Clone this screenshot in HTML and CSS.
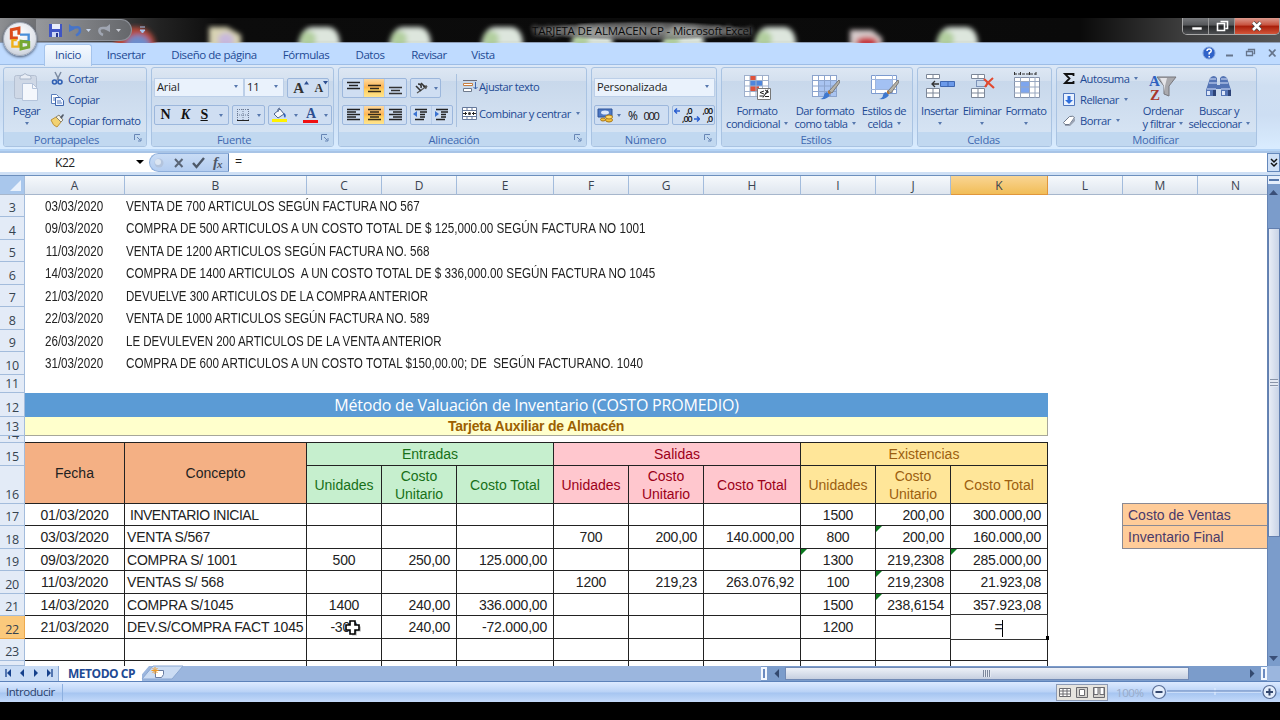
FILE: index.html
```html
<!DOCTYPE html>
<html lang="es">
<head>
    <meta charset="UTF-8">
    <title>TARJETA DE ALMACEN CP - Microsoft Excel</title>
    <link rel="stylesheet" href="styles.css">
</head>
<body>
    <div class="window">
        <!-- barra de título -->
        <div class="titlebar">
            <svg class="desktop" width="1280" height="25" viewBox="0 0 1280 25">
                <defs><filter id="soft"><feGaussianBlur stdDeviation="2.6"/></filter></defs>
                <g filter="url(#soft)">
                    <ellipse cx="135" cy="26" rx="20" ry="17" fill="#b5493a"/><ellipse cx="138" cy="28" rx="12" ry="11" fill="#6d8ccb"/>
                    <path d="M209 9h18l14 8v12h-32z" fill="#d8d3b4"/><ellipse cx="226" cy="22" rx="8" ry="7" fill="#c8b8dc"/>
                    <path d="M298 28q2-18 14-19h16q12 1 12 19z" fill="#dde6dd"/><circle cx="308" cy="21" r="8" fill="#b2cf9f"/>
                    <path d="M389 28q2-18 14-19h16q12 1 12 19z" fill="#dde6dd"/><circle cx="399" cy="21" r="8" fill="#b2cf9f"/>
                    <path d="M481 28q2-18 14-19h16q12 1 12 19z" fill="#dde6dd"/><circle cx="491" cy="21" r="8" fill="#b2cf9f"/>
                    <path d="M571 28q2-18 14-19h16q12 1 12 19z" fill="#dde6dd"/><circle cx="581" cy="21" r="8" fill="#b2cf9f"/>
                    <path d="M662 28q2-18 14-19h16q12 1 12 19z" fill="#dde6dd"/><circle cx="672" cy="21" r="8" fill="#b2cf9f"/>
                    <path d="M754 28q2-18 14-19h16q12 1 12 19z" fill="#dde6dd"/><circle cx="764" cy="21" r="8" fill="#b2cf9f"/>
                    <path d="M850 12h22l10 8v8h-32z" fill="#d8cccc"/><ellipse cx="867" cy="24" rx="11" ry="5" fill="#c8343c"/>
                    <path d="M936 28q2-18 14-19h16q12 1 12 19z" fill="#dde6dd"/><circle cx="946" cy="21" r="8" fill="#b2cf9f"/>
                </g>
            </svg>
            <div class="quick">
                <svg width="108" height="22" viewBox="0 0 108 22">
                    <path d="M13 5h13v13H13z" fill="#4055c4"/><path d="M16 5h8v5h-8z" fill="#e8edfb"/><path d="M16 13h7v5h-7z" fill="#cdd6f4"/><path d="M20 14h2v4h-2z" fill="#26368e"/>
                    <path d="M34 8.500h5c6-2 7 5 1 8" fill="none" stroke="#4774c8" stroke-width="2.500"/><path d="M33 5v8l6-3z" fill="#4774c8"/>
                    <path d="M50 10h5l-2.500 3z" fill="#c7d4ea"/>
                    <path d="M72 9h-4c-6-1-6 5-1 7" fill="none" stroke="#a0a6b2" stroke-width="2.500"/><path d="M74 5v8l-6-3z" fill="#a0a6b2"/>
                    <path d="M80 10h5l-2.500 3z" fill="#c7cad2"/>
                    <path d="M104 8h5M104 11h5l-2.500 3z" fill="#a7c3ec" stroke="#a7c3ec"/>
                </svg>
            </div>
            <div class="title">TARJETA DE ALMACEN CP - Microsoft Excel</div>
            <div class="winbtns">
                <span class="wb"><svg width="26" height="17"><path d="M9 9h10v3H9z" fill="#fff" stroke="#333" stroke-width=".6"/></svg></span>
                <span class="wb"><svg width="26" height="17"><path d="M11.500 3.500h7v7h-2M8.500 5.500h7v7h-7z" fill="none" stroke="#fff" stroke-width="1.600"/></svg></span>
                <span class="wb close"><svg width="44" height="17"><path d="M18 4.500l7.500 7.500M25.500 4.500L18 12" stroke="#444" stroke-width="4"/><path d="M18 4.500l7.500 7.500M25.500 4.500L18 12" stroke="#fff" stroke-width="2.600"/></svg></span>
            </div>
        </div>

        <div class="office">
            <svg width="24" height="26" viewBox="0 0 22 24" fill="none" stroke-width="2.800">
                <path d="M9 11H3V3.500l7-1.500v6" stroke="#dc4c1c"/>
                <path d="M11 8h8v6h-6" stroke="#4a8fd8" stroke-width="2.200"/>
                <path d="M8 13H4v6h6v-5" stroke="#f0b018" stroke-width="2.200"/>
                <path d="M12 14v7l7-1.500V15z" stroke="#76a832"/>
            </svg>
        </div>

        <!-- pestañas -->
        <div class="tabs">
            <span class="tab active">Inicio</span>
            <span class="tab insertar">Insertar</span>
            <span class="tab diseno">Diseño de página</span>
            <span class="tab formulas">Fórmulas</span>
            <span class="tab datos">Datos</span>
            <span class="tab revisar">Revisar</span>
            <span class="tab vista">Vista</span>
            <svg class="mdi" width="78" height="18" viewBox="0 0 78 18">
                <circle cx="7" cy="9" r="6" fill="#2f62c9" stroke="#7e9fd8"/><path d="M5 7q0-2 2.200-2t2 2q0 1-2 2v1.500M7.200 12v1.500" fill="none" stroke="#fff" stroke-width="1.500"/>
                <path d="M24 11.500h7" stroke="#66758c" stroke-width="2"/>
                <path d="M46.500 6.500v-1h6v4h-1M44.500 7.500h6v4h-6z" fill="none" stroke="#66758c" stroke-width="1.300"/>
                <path d="M67 5.500l6.500 7M73.500 5.500l-6.500 7" stroke="#66758c" stroke-width="1.800"/>
            </svg>
        </div>

        <!-- cinta de opciones -->
        <div class="ribbon">
            <div class="group g-clip">
                <div class="body">
                    <div class="big pegar">
                        <svg width="28" height="30" viewBox="0 0 28 30">
                            <rect x="1.500" y="3.500" width="22" height="23" rx="2" fill="#cfd8e6" stroke="#b4c0d2"/>
                            <path d="M7 5q0-2 3-2 2-3 4 0 4 0 4 2v2H7z" fill="#e8edf5" stroke="#a9b6ca"/>
                            <path d="M9.500 11.500h10l5 5v12h-15z" fill="#f4f7fc" stroke="#b4c3da"/><path d="M19.500 11.500v5h5" fill="none" stroke="#b4c3da"/>
                        </svg>
                        <span>Pegar</span><i class="dn"></i>
                    </div>
                    <div class="lines">
                        <div class="line"><svg width="15" height="15" viewBox="0 0 15 15"><path d="M5 1l4 8M11 1L7 9" stroke="#7d8ca3" stroke-width="1.500"/><circle cx="4.500" cy="11" r="2" fill="none" stroke="#2f5fb3" stroke-width="1.600"/><circle cx="10" cy="11" r="2" fill="none" stroke="#2f5fb3" stroke-width="1.600"/></svg>Cortar</div>
                        <div class="line"><svg width="15" height="15" viewBox="0 0 15 15"><path d="M1.500 2.500h5l2 2v7h-7z" fill="#fff" stroke="#5a7fbd"/><path d="M5.500 5.500h5l3 3v5h-8z" fill="#eef4ff" stroke="#3f66ad"/><path d="M7 9h4M7 11h5M3 6h2M3 8h2" stroke="#5a7fbd"/></svg>Copiar</div>
                        <div class="line"><svg width="15" height="15" viewBox="0 0 15 15"><path d="M1 7l5-3 5 5-4 5q-4-1-6-7z" fill="#f2d272" stroke="#bd9440"/><path d="M6 4l5 5 2-2-4-5z" fill="#f4f1e4" stroke="#8b8574"/><path d="M10 4l3-3 1 1-2.500 4z" fill="#555d6b"/></svg>Copiar formato</div>
                    </div>
                </div>
                <div class="label">Portapapeles<svg class="dlg" width="8" height="8"><path d="M.5 6V.5H6M3 3l3.500 3.500M7 4v3H4" fill="none" stroke="#6886b5"/></svg></div>
            </div>

            <div class="group g-font">
                <div class="body stack">
                    <div class="row">
                        <div class="combo name">Arial<i class="dn"></i></div>
                        <div class="combo size">11<i class="dn"></i></div>
                        <div class="btns sizes"><b class="serif up">A<svg width="5" height="4"><path d="M0 3.500h5L2.500 0z" fill="#2d4f91"/></svg></b><b class="serif small">A<svg width="5" height="4"><path d="M0 0h5L2.500 3.500z" fill="#2d4f91"/></svg></b></div>
                    </div>
                    <div class="row">
                        <div class="btns nks"><b>N</b><b class="it">K</b><b class="un">S</b><i class="dn"></i></div>
                        <div class="btns brd"><svg width="14" height="14" viewBox="0 0 14 14"><path d="M1.500 1v12M12.500 1v12M7 1v12M1 1.500h12M1 7h12" stroke="#6b7a94" stroke-dasharray="1 1"/><path d="M1 12.500h12" stroke="#222"/></svg><i class="dn"></i></div>
                        <div class="btns clr">
                            <svg width="16" height="16" viewBox="0 0 16 16"><path d="M2 7l6-5 4 5-6 4z" fill="#f6f8fc" stroke="#4d638c"/><path d="M6 5q-1-4 2-4" fill="none" stroke="#4d638c"/><path d="M12 6q3 2 1 5-2-2-1-5z" fill="#2f62bf"/><path d="M0 12h15v3H0z" fill="#fff200"/></svg><i class="dn"></i>
                            <span class="fc">A</span><i class="dn"></i>
                        </div>
                    </div>
                </div>
                <div class="label">Fuente<svg class="dlg" width="8" height="8"><path d="M.5 6V.5H6M3 3l3.500 3.500M7 4v3H4" fill="none" stroke="#6886b5"/></svg></div>
            </div>

            <div class="group g-align">
                <div class="body">
                    <div class="stack">
                        <div class="row">
                            <div class="btns three">
                                <span><svg width="15" height="14"><path d="M1 1.500h13M3 4.500h9M1 7.500h13" stroke="#222" stroke-width="1.400"/></svg></span>
                                <span class="on"><svg width="15" height="14"><path d="M1 4.500h13M3 7.500h9M1 10.500h13" stroke="#33291a" stroke-width="1.400"/></svg></span>
                                <span><svg width="15" height="14"><path d="M1 6.500h13M3 9.500h9M1 12.500h13" stroke="#333" stroke-width="1.400"/></svg></span>
                            </div>
                            <div class="btns ori"><svg width="15" height="14" viewBox="0 0 15 14"><path d="M3 12L13 5M13 5l-4 .5M13 5l-1.500 3" stroke="#555" fill="none" stroke-width="1.300"/><path d="M2 5l5 5M4 3q4 0 3 4M7 2l4 4" stroke="#333" fill="none" stroke-width="1.600"/></svg><i class="dn"></i></div>
                        </div>
                        <div class="row">
                            <div class="btns three">
                                <span><svg width="15" height="14"><path d="M1 1.500h13M1 4h9M1 6.500h13M1 9h9M1 11.500h13" stroke="#222" stroke-width="1.300"/></svg></span>
                                <span class="on"><svg width="15" height="14"><path d="M1 1.500h13M3 4h9M1 6.500h13M3 9h9M1 11.500h13" stroke="#33291a" stroke-width="1.300"/></svg></span>
                                <span><svg width="15" height="14"><path d="M1 1.500h13M5 4h9M1 6.500h13M5 9h9M1 11.500h13" stroke="#222" stroke-width="1.300"/></svg></span>
                            </div>
                            <div class="btns two">
                                <span><svg width="15" height="14"><path d="M2 1.500h12M7 4h7M7 6.500h5M7 9h5M2 11.500h9" stroke="#222" stroke-width="1.400"/><path d="M0 6l4-3v6z" fill="#3b73d1"/></svg></span>
                                <span><svg width="15" height="14"><path d="M2 1.500h12M7 4h7M7 6.500h5M7 9h5M2 11.500h9" stroke="#222" stroke-width="1.400"/><path d="M5 6L1 3v6z" fill="#3b73d1"/></svg></span>
                            </div>
                        </div>
                    </div>
                    <div class="wraps">
                        <div class="line"><svg width="16" height="15" viewBox="0 0 16 15"><path d="M1 1.500h14" stroke="#6b6b78"/><path d="M1.500 4.500h9v2h-9z" fill="#fff" stroke="#c77e40"/><path d="M1.500 9.500h8v3h-8z" fill="#fff" stroke="#6f7a8c"/><path d="M13.500 3v7l-2-2M13.500 10l2-2" fill="none" stroke="#3f66ad"/></svg>Ajustar texto</div>
                        <div class="line"><svg width="16" height="15" viewBox="0 0 16 15"><path d="M.5 1.500h14v12H.5zM.5 4.500h14M.5 10.500h14M5 1.500v3M10 1.500v3M5 10.500v3M10 10.500v3" fill="#fff" stroke="#64789b"/><path d="M1 7.500h4M10 7.500h4M3.500 6v3M11.500 6v3" stroke="#222"/><circle cx="7.500" cy="7.500" r="1.500" fill="#333"/></svg>Combinar y centrar<i class="dn"></i></div>
                    </div>
                </div>
                <div class="label">Alineación<svg class="dlg" width="8" height="8"><path d="M.5 6V.5H6M3 3l3.500 3.500M7 4v3H4" fill="none" stroke="#6886b5"/></svg></div>
            </div>

            <div class="group g-num">
                <div class="body stack">
                    <div class="row"><div class="combo fmt">Personalizada<i class="dn"></i></div></div>
                    <div class="row">
                        <div class="btns money">
                            <svg width="17" height="16" viewBox="0 0 17 16"><path d="M1 2h14v8H1z" fill="#4f79c4" stroke="#2f5598"/><ellipse cx="8" cy="5.500" rx="4" ry="2" fill="#dbe7fb"/><ellipse cx="12" cy="13" rx="3.500" ry="2" fill="#f4c23c" stroke="#a8771c"/><ellipse cx="12" cy="10" rx="3.500" ry="2" fill="#ffd968" stroke="#a8771c"/><ellipse cx="6" cy="12.500" rx="2.500" ry="1.500" fill="#f4c23c" stroke="#a8771c"/></svg><i class="dn"></i>
                            <span class="pct">%</span><span class="mil">000</span>
                        </div>
                        <div class="btns dec">
                            <span class="dd"><em>,0</em><em>,00</em><svg width="6" height="6"><path d="M0 3h6M3 .5L.5 3 3 5.500" fill="none" stroke="#2b5fd0" stroke-width="1.500"/></svg></span>
                            <span class="dd r"><em>,00</em><em>,0</em><svg width="6" height="6"><path d="M0 3h6M3 .5L5.500 3 3 5.500" fill="none" stroke="#2b5fd0" stroke-width="1.500"/></svg></span>
                        </div>
                    </div>
                </div>
                <div class="label">Número<svg class="dlg" width="8" height="8"><path d="M.5 6V.5H6M3 3l3.500 3.500M7 4v3H4" fill="none" stroke="#6886b5"/></svg></div>
            </div>

            <div class="group g-styles">
                <div class="body">
                    <div class="big b1">
                        <svg width="30" height="30" viewBox="0 0 30 30"><path d="M2 3h25v22H2z" fill="#fff"/><path d="M8 3h6v5H8z" fill="#e0523a"/><path d="M8 8h12v6H8z" fill="#4f86dc"/><path d="M8 14h9v6H8z" fill="#e0523a"/><path d="M2.500 3v22M8 3v22M14 3v22M20.500 3v22M26.500 3v22M2 3.500h25M2 8.500h25M2 14h25M2 19.500h25M2 24.500h25" stroke="#9fb0cc" fill="none"/><path d="M15.500 16.500h13v11h-13z" fill="#fff" stroke="#777"/><path d="M22 19l-4 1.500 4 1.500M17.500 24h4M23 18l3.500 2-3.500 2M23 24.500h4M26 17.500l-5 8" stroke="#222" fill="none"/></svg>
                        <span>Formato</span><span class="l2">condicional<i class="dn"></i></span>
                    </div>
                    <div class="big b2">
                        <svg width="30" height="30" viewBox="0 0 30 30"><path d="M2 3h25v22H2z" fill="#fff"/><path d="M8 9h19v16H8z" fill="#a9c4f1"/><path d="M2.500 3v22M8.500 3v22M14.500 3v22M20.500 3v22M26.500 3v22M2 3.500h25M2 8.500h25M2 14h25M2 19.500h25M2 24.500h25" stroke="#8ca4cd" fill="none"/><path d="M29 8l-10 11 3 2 8-11z" fill="#b6b3a9" stroke="#777"/><path d="M18 18l3 3q-1 2-3 1z" fill="#b57a3a"/><path d="M17 20l3 3q-3 5-10 4 4-1 4-4 1-3 3-3z" fill="#3f78ce"/></svg>
                        <span>Dar formato</span><span class="l2">como tabla<i class="dn"></i></span>
                    </div>
                    <div class="big b3">
                        <svg width="30" height="30" viewBox="0 0 30 30"><path d="M2.500 3.500h25v18h-25z" fill="#fff" stroke="#7d9bcf"/><path d="M6.500 7.500h17v10h-17z" fill="#a3c1f3" stroke="#6c90d2"/><path d="M2 7.500h25M6.500 3v18M23.500 3v18M2 17.500h25" stroke="#9db4dc" fill="none"/><path d="M29 8l-10 11 3 2 8-11z" fill="#b6b3a9" stroke="#777"/><path d="M18 18l3 3q-1 2-3 1z" fill="#b57a3a"/><path d="M17 20l3 3q-3 5-10 4 4-1 4-4 1-3 3-3z" fill="#3f78ce"/></svg>
                        <span>Estilos de</span><span class="l2">celda<i class="dn"></i></span>
                    </div>
                </div>
                <div class="label">Estilos</div>
            </div>

            <div class="group g-cells">
                <div class="body">
                    <div class="big c1">
                        <svg width="30" height="30" viewBox="0 0 30 30"><path d="M1.500 2.500h13v4h-13zM1.500 16.500h13v9h-13zM8 2.500v4M8 16.500v9M1.500 21h13" fill="#fff" stroke="#7c8798"/><path d="M15.500 9.500h14v5h-14z" fill="#6b9aea" stroke="#3e67b0"/><path d="M23 9.500v5" stroke="#3e67b0"/><path d="M14 12H7M10 9l-3 3 3 3" fill="none" stroke="#333" stroke-width="1.300"/></svg>
                        <span>Insertar</span><i class="dn"></i>
                    </div>
                    <div class="big c2">
                        <svg width="30" height="30" viewBox="0 0 30 30"><path d="M4.500 2.500h13v4h-13zM4.500 16.500h13v9h-13zM11 2.500v4M11 16.500v9M4.500 21h13" fill="#fff" stroke="#7c8798"/><path d="M9.500 8.500h10v6h-10z" fill="none" stroke="#2d4b85" stroke-dasharray="1 1"/><path d="M17 7l10 9M26 6q-5 4-8 9" fill="none" stroke="#e2492f" stroke-width="2.200"/></svg>
                        <span>Eliminar</span><i class="dn"></i>
                    </div>
                    <div class="big c3">
                        <svg width="30" height="30" viewBox="0 0 30 30"><path d="M3.500 5.500h25v20h-25z" fill="#fff" stroke="#8592aa"/><path d="M10 9h8v12h-8z" fill="#7ea6ee"/><path d="M9.500 5v21M18.500 5v21M24 5v21M3 9.500h25M3 15h25M3 21h25" stroke="#98a7c0" fill="none"/><path d="M3 2h22M3.500 0v4M9.500 0v4M18.500 0v4M25 0v4" stroke="#333" stroke-dasharray="3 1"/></svg>
                        <span>Formato</span><i class="dn"></i>
                    </div>
                </div>
                <div class="label">Celdas</div>
            </div>

            <div class="group g-edit">
                <div class="body">
                    <div class="lines">
                        <div class="line"><svg width="15" height="15" viewBox="0 0 15 15"><path d="M11.500 5V3H3l4.500 4.500L3 12h8.500v-2" fill="none" stroke="#111" stroke-width="1.800"/></svg>Autosuma<i class="dn"></i></div>
                        <div class="line"><svg width="15" height="15" viewBox="0 0 15 15"><path d="M1.500 1.500h11v12h-11z" fill="#e8f1ff" stroke="#4f76bd"/><path d="M5.500 4h3v4H11l-4 4-4-4h2.500z" fill="#2f6edb"/></svg>Rellenar<i class="dn"></i></div>
                        <div class="line"><svg width="15" height="15" viewBox="0 0 15 15"><path d="M1.500 9.500l6-6q4-1 5 1l-5 7H3z" fill="#fff" stroke="#6f7a8c"/><path d="M3 12h4l6-7v3l-5 5H3z" fill="#9aa3b3"/></svg>Borrar<i class="dn"></i></div>
                    </div>
                    <div class="big e1">
                        <svg width="30" height="30" viewBox="0 0 30 30"><path d="M9 5h19l-7 9v10l-5-2v-8z" fill="#a9a9ad" stroke="#77777d"/><path d="M12 6h7l-2 8v6l-1-6z" fill="#e4e4e8"/><text x="1" y="14" class="za">A</text><text x="2" y="28" class="zz">Z</text></svg>
                        <span>Ordenar</span><span class="l2">y filtrar<i class="dn"></i></span>
                    </div>
                    <div class="big e2">
                        <svg width="30" height="30" viewBox="0 0 30 30"><path d="M6 6q4-4 7 0v7h3V6q3-4 7 0l4 12v6H17v-7h-5v7H2v-6z" fill="#5474b4"/><path d="M6 7h6M17 7h6M5 11h8M16 11h8M3 17h9M17 17h9" stroke="#a9bce2" stroke-width="1.500"/><path d="M3 19h3v4H3zM18 19h3v4h-3z" fill="#dbe5f8"/><path d="M9 18h3v6H9zM24 18h3v6h-3z" fill="#2e4478"/></svg>
                        <span>Buscar y</span><span class="l2">seleccionar<i class="dn"></i></span>
                    </div>
                </div>
                <div class="label">Modificar</div>
            </div>
        </div>

        <!-- barra de fórmulas -->
        <div class="fbar">
            <div class="namebox"><span>K22</span><i class="dn"></i></div>
            <div class="fbtns"><svg width="79" height="19" viewBox="0 0 79 19"><circle cx="9" cy="9" r="4.500" fill="#b3c4dd"/><circle cx="8" cy="8" r="3" fill="#dbe5f2"/><path d="M25 5l7.500 8M32.500 5L25 13" stroke="#5a6576" stroke-width="2"/><path d="M43 9l3.500 4L54 4" fill="none" stroke="#4d5868" stroke-width="2.400"/><text x="63" y="13" class="fx">f</text><text x="67" y="14" class="fx sm">x</text></svg></div>
            <div class="formula">=</div>
            <div class="expand"><svg width="12" height="18"><path d="M3 5l3 3 3-3M3 9l3 3 3-3" fill="none" stroke="#111" stroke-width="1.500"/></svg></div>
        </div>

        <!-- hoja -->
        <div class="work">
            <div class="sheet">
                <div class="ch corner"><svg width="12" height="12"><path d="M11 0v11H0z" fill="#e9f1fc"/></svg></div>
                <div class="ch">A</div><div class="ch">B</div><div class="ch">C</div><div class="ch">D</div><div class="ch">E</div><div class="ch">F</div><div class="ch">G</div><div class="ch">H</div><div class="ch">I</div><div class="ch">J</div><div class="ch sel">K</div><div class="ch">L</div><div class="ch">M</div><div class="ch last">N</div>

                <div class="rn">3</div><div class="nd"><span>03/03/2020</span></div><div class="nt"><span>VENTA DE 700 ARTICULOS SEGÚN FACTURA NO 567</span></div>
                <div class="rn">4</div><div class="nd"><span>09/03/2020</span></div><div class="nt"><span class="wide">COMPRA DE 500 ARTICULOS A UN COSTO TOTAL DE $ 125,000.00 SEGÚN FACTURA NO 1001</span></div>
                <div class="rn">5</div><div class="nd"><span>11/03/2020</span></div><div class="nt"><span>VENTA DE 1200 ARTICULOS SEGÚN FACTURA NO. 568</span></div>
                <div class="rn">6</div><div class="nd"><span>14/03/2020</span></div><div class="nt"><span class="wide">COMPRA DE 1400 ARTICULOS&nbsp; A UN COSTO TOTAL DE $ 336,000.00 SEGÚN FACTURA NO 1045</span></div>
                <div class="rn">7</div><div class="nd"><span>21/03/2020</span></div><div class="nt"><span class="tight">DEVUELVE 300 ARTICULOS DE LA COMPRA ANTERIOR</span></div>
                <div class="rn">8</div><div class="nd"><span>22/03/2020</span></div><div class="nt"><span>VENTA DE 1000 ARTICULOS SEGÚN FACTURA NO. 589</span></div>
                <div class="rn">9</div><div class="nd"><span>26/03/2020</span></div><div class="nt"><span class="tight">LE DEVULEVEN 200 ARTICULOS DE LA VENTA ANTERIOR</span></div>
                <div class="rn">10</div><div class="nd"><span>31/03/2020</span></div><div class="nt"><span class="wide">COMPRA DE 600 ARTICULOS A UN COSTO TOTAL $150,00.00; DE&nbsp; SEGÚN FACTURANO. 1040</span></div>
                <div class="rn">11</div><div class="rest s14"></div>
                <div class="rn">12</div><div class="band blue"><span>Método de Valuación de Inventario (COSTO PROMEDIO)</span></div><div class="rest s3"></div>
                <div class="rn">13</div><div class="band yellow"><span>Tarjeta Auxiliar de Almacén</span></div><div class="rest s3"></div>
                <div class="rn r14">14</div><div class="gap"></div><div class="rest s3"></div>

                <div class="rn">15</div><div class="h or tall">Fecha</div><div class="h or tall">Concepto</div><div class="h gr s3">Entradas</div><div class="h pk s3">Salidas</div><div class="h ye s3">Existencias</div><div class="rest s3"></div>
                <div class="rn">16</div>
                <div class="h gr">Unidades</div><div class="h gr">Costo<br>Unitario</div><div class="h gr">Costo Total</div>
                <div class="h pk">Unidades</div><div class="h pk">Costo<br>Unitario</div><div class="h pk">Costo Total</div>
                <div class="h ye">Unidades</div><div class="h ye">Costo<br>Unitario</div><div class="h ye">Costo Total</div><div class="rest s3"></div>

                <div class="rn">17</div><div class="c">01/03/2020</div><div class="c l ini">INVENTARIO INICIAL</div><div class="c"></div><div class="c"></div><div class="c"></div><div class="c"></div><div class="c"></div><div class="c"></div><div class="c">1500</div><div class="c n">200,00</div><div class="c n">300.000,00</div><div class="rest"></div><div class="side top">Costo de Ventas</div>
                <div class="rn">18</div><div class="c">03/03/2020</div><div class="c l">VENTA S/567</div><div class="c"></div><div class="c"></div><div class="c"></div><div class="c">700</div><div class="c n">200,00</div><div class="c n">140.000,00</div><div class="c">800</div><div class="c n err">200,00</div><div class="c n">160.000,00</div><div class="rest"></div><div class="side">Inventario Final</div>
                <div class="rn">19</div><div class="c">09/03/2020</div><div class="c l">COMPRA S/ 1001</div><div class="c">500</div><div class="c n">250,00</div><div class="c n">125.000,00</div><div class="c"></div><div class="c"></div><div class="c"></div><div class="c err">1300</div><div class="c n">219,2308</div><div class="c n err">285.000,00</div><div class="rest s3"></div>
                <div class="rn">20</div><div class="c">11/03/2020</div><div class="c l">VENTAS S/ 568</div><div class="c"></div><div class="c"></div><div class="c"></div><div class="c">1200</div><div class="c n">219,23</div><div class="c n">263.076,92</div><div class="c">100</div><div class="c n err">219,2308</div><div class="c n">21.923,08</div><div class="rest s3"></div>
                <div class="rn">21</div><div class="c">14/03/2020</div><div class="c l">COMPRA S/1045</div><div class="c">1400</div><div class="c n">240,00</div><div class="c n">336.000,00</div><div class="c"></div><div class="c"></div><div class="c"></div><div class="c">1500</div><div class="c n err">238,6154</div><div class="c n">357.923,08</div><div class="rest s3"></div>
                <div class="rn sel">22</div><div class="c">21/03/2020</div><div class="c l dev">DEV.S/COMPRA FACT 1045</div><div class="c">-300<svg class="cursor" width="20" height="20" viewBox="0 0 20 20"><path d="M8 3h5v4h4v5h-4v4H8v-4H4V7h4z" fill="#888" opacity=".5" transform="translate(1 1.500)"/><path d="M7 3h5v4h4v5h-4v4H7v-4H3V7h4z" fill="#fff" stroke="#000" stroke-width="1.600"/></svg></div><div class="c n">240,00</div><div class="c n">-72.000,00</div><div class="c"></div><div class="c"></div><div class="c"></div><div class="c">1200</div><div class="c"></div><div class="c edit"><div class="editor">=<i class="caret"></i></div></div><div class="rest s3"></div>
                <div class="rn">23</div><div class="c"></div><div class="c"></div><div class="c"></div><div class="c"></div><div class="c"></div><div class="c"></div><div class="c"></div><div class="c"></div><div class="c"></div><div class="c"></div><div class="c"></div><div class="rest s3"></div>
                <div class="rn"></div><div class="c nb"></div><div class="c nb"></div><div class="c nb"></div><div class="c nb"></div><div class="c nb"></div><div class="c nb"></div><div class="c nb"></div><div class="c nb"></div><div class="c nb"></div><div class="c nb"></div><div class="c nb"></div><div class="rest s3"></div>
            </div>
            <div class="vscroll">
                <div class="split"></div>
                <svg class="arr" width="11" height="10"><path d="M1 7h9L5.500 2z" fill="#3a4f78"/></svg>
                <div class="vthumb"><i></i></div>
                <svg class="arr" width="11" height="12"><path d="M1 2h9L5.500 7z" fill="#3a4f78"/></svg>
            </div>
        </div>

        <!-- hojas y barra horizontal -->
        <div class="bottom">
            <svg class="nav" width="59" height="15"><path d="M6 3v8M52 3v8" stroke="#16418c" stroke-width="1.300"/><path d="M11 3v8L7 7zM24 3v8l-4-4zM34 3v8l4-4zM47 3v8l4-4z" fill="#16418c"/></svg>
            <div class="stab">METODO CP</div>
            <svg class="newtab" width="42" height="15" viewBox="0 0 42 15"><path d="M0 13L11 0h30L30 13z" fill="#cbdcf3" stroke="#8aa7d2"/><path d="M-4 13L7 0H-4z" fill="#fff"/><path d="M13.500 4.500h8v4l-2 3h-6z" fill="#fff" stroke="#6a7ea3"/><path d="M13 1v7M9.500 4.500h7M10.500 2l5 5M15.500 2l-5 5" stroke="#ef9b28"/></svg>
            <div class="hscroll">
                <i class="grip"></i>
                <svg width="18" height="15"><path d="M12 3v9L7.500 7.500z" fill="#33496f"/></svg>
                <div class="hthumb"><i></i></div>
                <svg class="right" width="18" height="15"><path d="M7 3v9l4.500-4.500z" fill="#33496f"/></svg>
                <i class="grip"></i>
            </div>
        </div>

        <div class="status">
            <span class="mode">Introducir</span>
            <div class="views"><svg width="52" height="17" viewBox="0 0 52 17" fill="none" stroke="#6b6b70"><path d="M3.500 4.500h11v8h-11zM3 7h12M3 10h12M7 4v9M11 4v9" fill="#fff"/><path d="M20.500 3.500h11v10h-11z" fill="#d5d3cf"/><path d="M23.500 5.500h5v6h-5z" fill="#fff"/><path d="M37.500 3.500h11v10h-11z" fill="#d5d3cf"/><path d="M38 3.500h4v7h-4zM44 3.500h4v7h-4z" fill="#fff"/></svg></div>
            <span class="pc">100%</span>
            <svg class="zoom" width="130" height="21" viewBox="0 0 130 21"><path d="M17 10h94M65 6v7" stroke="#e6f0ff"/><path d="M17 9h94" stroke="#5d7fb8"/><circle cx="9" cy="10" r="6.500" fill="#e4eefc" stroke="#5a6f98" stroke-width="1.200"/><path d="M5.500 10h7" stroke="#33476e" stroke-width="2"/><circle cx="119.500" cy="10" r="6.500" fill="#e4eefc" stroke="#5a6f98" stroke-width="1.200"/><path d="M116 10h7M119.500 6.500v7" stroke="#33476e" stroke-width="2"/></svg>
        </div>
    </div>
</body>
</html>
```

FILE: styles.css
```css
* {
    box-sizing: border-box;
}

body {
    margin: 0;
    background: #000;
    font-family: "Open Sans", "Noto Sans", sans-serif;
    font-size: 11.5px;
    letter-spacing: -0.45px;
    color: #1e4a94;
    overflow: hidden;
}

svg {
    display: block;
    flex: none;
}

.window {
    position: relative;
    width: 1280px;
    height: 720px;
    padding: 18px 0;
    overflow: hidden;
}

/* barra de titulo */
.titlebar {
    position: relative;
    display: grid;
    grid-template-columns: 532px 1fr 98px;
    height: 25px;
    background: linear-gradient(90deg, #8d8f92 0, #5b5c5f 60px, #222 160px, #0c0c0c 220px, #0a0a0a 1080px, #3c3c3c 1180px, #555 100%);
    border-bottom: 1px solid #8e9db5;
}

.desktop {
    position: absolute;
    left: 0;
    top: 0;
}

.quick {
    position: relative;
    width: 96px;
    height: 22px;
    margin: 1px 0 0 36px;
    border: 1px solid #8d9199;
    border-left: 0;
    border-radius: 0 11px 11px 0;
    background: linear-gradient(90deg, #96989c, #65676b);
}

.quick svg {
    margin-top: -1px;
    overflow: visible;
}

.title {
    position: relative;
    justify-self: start;
    height: 20px;
    margin-top: 3px;
    line-height: 20px;
    letter-spacing: -0.15px;
    white-space: nowrap;
    color: #0b0b0b;
    background: radial-gradient(closest-side, rgba(155,155,155,.8), rgba(110,110,110,.7) 75%, rgba(90,90,90,0));
    text-shadow: 0 0 5px #aaa, 0 0 5px #999;
}

.winbtns {
    position: relative;
    display: flex;
    height: 17px;
    border: 1px solid #a9a9a9;
    border-top: 0;
    border-radius: 0 0 5px 5px;
    overflow: hidden;
}

.wb {
    width: 26px;
    border-right: 1px solid #999;
    background: linear-gradient(#77797c, #55575a 45%, #232425 50%, #4d4f52);
}

.close {
    width: 45px;
    border: 0;
    background: linear-gradient(#dd9a8e, #c7513d 45%, #a71c08 50%, #d3563a);
}

.office {
    position: absolute;
    left: 3px;
    top: 22px;
    z-index: 2;
    display: flex;
    align-items: center;
    justify-content: center;
    width: 34px;
    height: 34px;
    border-radius: 50%;
    border: 1px solid #a4abb8;
    background: radial-gradient(circle at 50% 35%, #fff, #dfe3ea 60%, #b6bdca);
    box-shadow: 0 1px 3px #44536c;
}

/* pestañas */
.tabs {
    display: flex;
    height: 22px;
    padding-left: 44px;
    background: #bfdbff;
    border-bottom: 1px solid #9dbde6;
}

.tab {
    width: 68px;
    padding-top: 2px;
    line-height: 20px;
    text-align: center;
    white-space: nowrap;
}

.tab.active {
    width: 48px;
    height: 22px;
    margin-top: 1px;
    padding-top: 0;
    border: 1px solid #a5c4ec;
    border-bottom: 0;
    border-radius: 3px 3px 0 0;
    background: linear-gradient(#f4f9ff, #dfeaf8);
    line-height: 20px;
}

.tab.diseno { width: 108px; }
.tab.formulas { width: 76px; }
.tab.datos { width: 52px; }
.tab.revisar { width: 66px; }
.tab.vista { width: 42px; }

.mdi {
    margin: 1px 0 0 auto;
}

/* cinta */
.ribbon {
    display: flex;
    height: 86px;
    padding: 2px 0 0 3px;
    font-size: 11.2px;
    letter-spacing: -0.5px;
    background: linear-gradient(#dce8f7, #cfdff2 25%, #cddef3 60%, #d9ecff);
    border-bottom: 2px solid #b4d3f5;
}

.group {
    flex: none;
    display: flex;
    flex-direction: column;
    height: 80px;
    margin-right: 4px;
    border: 1px solid #a9c3e2;
    border-radius: 3px;
    background: linear-gradient(#dde7f3, #d4e0ef 16%, #c8d8eb 17%, #d9e6f5);
    white-space: nowrap;
}

.g-clip { width: 144px; }
.g-font { width: 183px; }
.g-align { width: 249px; }
.g-num { width: 126px; }
.g-styles { width: 192px; }
.g-cells { width: 135px; }
.g-edit { width: 201px; margin: 0; }

.body {
    display: flex;
    height: 64px;
}

.label {
    position: relative;
    height: 14px;
    line-height: 15px;
    padding-right: 17px;
    text-align: center;
    letter-spacing: -0.3px;
    color: #4069b0;
    background: #c1d8f0;
    border-radius: 0 0 2px 2px;
}

.g-styles .label,
.g-cells .label,
.g-edit .label {
    padding-right: 2px;
}

.dlg {
    position: absolute;
    right: 4px;
    top: 2px;
}

.dn {
    display: inline-block;
    flex: none;
    width: 0;
    height: 0;
    border: 2.5px solid transparent;
    border-top: 3px solid #5778ae;
    border-bottom: 0;
}

.big {
    display: flex;
    flex-direction: column;
    align-items: center;
    padding-top: 4px;
    line-height: 13px;
}

.big svg {
    margin-bottom: 2px;
}

.big > .dn {
    margin-top: 5px;
}

.big span {
    display: block;
}

.big .l2 {
    display: flex;
    align-items: center;
    gap: 4px;
}

.pegar { width: 45px; }
.b1 { width: 70px; }
.b2 { width: 66px; }
.b3 { width: 52px; }
.c1 { width: 43px; }
.c2 { width: 42px; }
.c3 { width: 46px; }
.e1 { width: 44px; margin-left: 7px; }
.e2 { width: 68px; }

.lines {
    display: flex;
    flex-direction: column;
    padding: 0 0 0 1px;
}

.line {
    display: flex;
    align-items: center;
    height: 21px;
    gap: 3px;
}

.g-edit .lines {
    width: 77px;
    padding-left: 5px;
}

.g-edit .line .dn {
    margin-left: 2px;
}

.stack {
    display: flex;
    flex-direction: column;
    gap: 7px;
    padding: 10px 0 0 2px;
}

.g-align .stack {
    padding-left: 3px;
}

.row {
    display: flex;
    gap: 3px;
    height: 20px;
}

.combo {
    display: flex;
    align-items: center;
    justify-content: space-between;
    height: 19px;
    padding: 0 5px 2px 2px;
    background: #eaf2fc;
    border: 1px solid #bccfe8;
    letter-spacing: -0.2px;
    color: #222;
}

.combo.name { width: 90px; margin-right: -3px; }
.combo.size { width: 40px; }
.combo.fmt { width: 121px; }

.btns {
    display: flex;
    align-items: center;
    height: 20px;
    border: 1px solid #9cb7dc;
    border-radius: 2px;
    background: #cfdef2;
    color: #111;
}

.sizes { width: 42px; justify-content: space-around; }
.sizes svg { position: absolute; right: -5px; top: 2px; }

.serif {
    position: relative;
    font: bold 15px/18px "Liberation Serif", serif;
    color: #333;
}

.serif.small { font-size: 12px; }

.nks {
    width: 75px;
    justify-content: space-around;
    font: bold 14px "Liberation Serif", serif;
}

.it { font-style: italic; }
.un { text-decoration: underline; }
.brd { width: 33px; justify-content: space-around; }
.clr { width: 64px; justify-content: space-around; }

.fc {
    width: 15px;
    height: 16px;
    border-bottom: 3px solid #f01010;
    font: bold 14px/13px "Liberation Serif", serif;
    text-align: center;
    color: #2d4f91;
}

.three span,
.two span {
    display: flex;
    align-items: center;
    justify-content: center;
    width: 21px;
    height: 18px;
    border-right: 1px solid #b9cde8;
}

.three { width: 65px; }
.two { width: 43px; }
.three span:last-child,
.two span:last-child { border: 0; }

.three .on {
    background: linear-gradient(#fdd9a0, #ffb755 45%, #ffcf5e 60%, #ffe48f);
}

.ori { width: 31px; justify-content: space-around; }

.wraps {
    display: flex;
    flex-direction: column;
    gap: 6px;
    height: 53px;
    margin: 6px 0 0 3px;
    padding: 2px 0 0 5px;
    border-left: 1px solid #a9c1df;
}

.wraps .line {
    gap: 1px;
}

.wraps .dn {
    margin-left: 4px;
}

.money { width: 75px; gap: 5px; padding-left: 2px; }
.pct { font-size: 12px; margin-left: 2px; }
.mil { font-size: 11px; letter-spacing: -1.2px; margin-left: 1px; }
.money .dn { margin-left: -2px; }
.dec { width: 43px; justify-content: space-around; }

.dd {
    position: relative;
    width: 17px;
    font-size: 9px;
    line-height: 8px;
    letter-spacing: -1px;
    text-align: right;
}

.dd em {
    display: block;
    font-style: normal;
    font-weight: 600;
}

.dd svg { position: absolute; left: -1px; top: 1px; }
.dd.r svg { top: auto; bottom: 1px; }

.za, .zz {
    font: bold 15px "Liberation Serif", serif;
    fill: #2f62bf;
}

.zz { fill: #a8362c; }

/* barra de formulas */
.fbar {
    display: flex;
    height: 25px;
    padding: 2px 0 0 1px;
    background: linear-gradient(#a8c4e6 0 2px, transparent 2px), linear-gradient(#fff 0 21px, #cfe0f5 21px 24px, #6c8fbd 24px);
}

.namebox {
    display: flex;
    align-items: center;
    justify-content: space-between;
    width: 148px;
    height: 19px;
    padding: 0 5px 1px 54px;
    color: #222;
    font-size: 12px;
}

.namebox .dn {
    border: 4px solid transparent;
    border-top: 4px solid #000;
    border-bottom: 0;
}

.fbtns {
    width: 80px;
    height: 19px;
    border-radius: 10px 0 0 10px;
    border: 1px solid #8daedb;
    border-right-color: #5e84b9;
    background: linear-gradient(#c9dcf5, #b4cdf0);
}

.fx {
    font: italic bold 15px "Liberation Serif", serif;
    fill: #4d5868;
}

.fx.sm { font-size: 11px; }

.formula {
    flex: 1;
    padding-left: 6px;
    font-size: 12.5px;
    line-height: 18px;
    color: #222;
}

.expand {
    width: 13px;
    height: 19px;
    border: 1px solid #6488bb;
    background: #cfe0f6;
}

/* hoja */
.work {
    display: flex;
    height: 490px;
    background: #fff;
}

.sheet {
    display: grid;
    width: 1267px;
    grid-template-columns: 25px 100px 182px 75px 75px 97px 75px 75px 97px 75px 75px 97px 75px 75px 69px;
    grid-template-rows: 19px 22px 23px 22px 23px 22px 23px 22px 23px 18px 24px 19px 7px 23px 38px 22px 23px 22px 23px 22px 23px 22px 5px;
    font: 14px "Liberation Sans", Arial, sans-serif;
    letter-spacing: 0;
    color: #222;
    white-space: nowrap;
    overflow: hidden;
}

.ch {
    border-right: 1px solid #a3bcdc;
    border-bottom: 1px solid #a6b6cc;
    background: linear-gradient(#f6f9fc, #dfe6ef);
    font: 12px/19px "Open Sans", sans-serif;
    text-align: center;
    color: #3a4350;
}

.ch.sel {
    background: linear-gradient(#f9d594, #f1bd57);
    border-color: #e0963c;
}

.ch.last {
    padding-left: 6px;
    border-right: 0;
}

.corner {
    display: flex;
    align-items: flex-end;
    justify-content: flex-end;
    padding: 0 2px 2px 0;
    background: #a9c7ec;
}

.rn {
    display: flex;
    align-items: flex-end;
    justify-content: center;
    border-right: 1px solid #a3bcdc;
    border-bottom: 1px solid #a3bcdc;
    background: #e3ebf7;
    font: 12.5px/17px "Open Sans", sans-serif;
    letter-spacing: -0.4px;
    color: #36434f;
    overflow: hidden;
}

.rn.sel {
    background: #fbc97c;
    border-color: #eda94d;
}

.rn.r14 {
    line-height: 14px;
}

.nd {
    margin-left: -1px;
    line-height: 22px;
    text-align: center;
}

.nt {
    grid-column: span 13;
    padding-left: 1px;
    line-height: 22px;
}

.nd span {
    display: inline-block;
    transform: scaleX(.83);
}

.nt span {
    display: inline-block;
    transform: scaleX(.833);
    transform-origin: 0 0;
}

.nt .wide { transform: scaleX(.836); }
.nt .tight { transform: scaleX(.822); }

.s3 { grid-column: span 3; }
.s14 { grid-column: span 14; }

.band {
    grid-column: span 11;
    text-align: center;
}

.blue {
    background: #5b9bd5;
    color: #fff;
    font: 16px/25px "Open Sans", sans-serif;
    letter-spacing: -0.2px;
}

.yellow {
    background: #ffffcc;
    color: #9c5f00;
    border: 1px solid #a7a79a;
    border-width: 0 1px 1px 0;
    font-weight: bold;
    font-size: 14px;
    letter-spacing: -0.2px;
    line-height: 18px;
}

.gap {
    grid-column: span 11;
    border-bottom: 1px solid #222;
}

.h {
    display: flex;
    align-items: center;
    justify-content: center;
    border-right: 1px solid #222;
    border-bottom: 1px solid #222;
    text-align: center;
    line-height: 18px;
}

.tall { grid-row: span 2; }
.or { background: #f4b084; color: #222; }
.gr { background: #c6efce; color: #187018; }
.pk { background: #ffc7ce; color: #9c0018; }
.ye { background: #ffe699; color: #9c5f10; }

.c {
    position: relative;
    border-right: 1px solid #222;
    border-bottom: 1px solid #222;
    line-height: 22px;
    letter-spacing: -0.2px;
    text-align: center;
}

.c.l { text-align: left; padding-left: 2px; }
.c.ini { padding-left: 5px; letter-spacing: -0.5px; }
.c.dev { letter-spacing: -0.15px; }
.c.n { text-align: right; padding-right: 6px; }
.c.nb { border-bottom: 0; }

/* marca de error de formula */
.err {
    background: linear-gradient(135deg, #0a7a1e 4px, transparent 4.5px) no-repeat;
}

.side {
    grid-column: span 2;
    padding-left: 5px;
    border-left: 1px solid #8a8a94;
    border-bottom: 1px solid #8a8a94;
    margin-left: -1px;
    background: #ffcc99;
    color: #4a3a6a;
    line-height: 22px;
}

.side.top {
    margin-top: -1px;
    border-top: 1px solid #8a8a94;
}

.editor {
    position: absolute;
    left: -1px;
    top: -2px;
    z-index: 1;
    width: 98px;
    height: 26px;
    border: 1px solid #333;
    background: #fff;
    line-height: 24px;
}

.editor::after {
    content: "";
    position: absolute;
    right: -2px;
    bottom: -1px;
    width: 3px;
    height: 4px;
    background: #000;
}

.caret {
    display: inline-block;
    width: 1px;
    height: 17px;
    background: #000;
    vertical-align: middle;
}

.cursor {
    position: absolute;
    left: 36px;
    top: 2px;
}

/* barras de desplazamiento */
.vscroll {
    display: flex;
    flex-direction: column;
    width: 13px;
    background: #7b9ccb;
    border-left: 1px solid #6584b4;
}

.split {
    height: 8px;
    margin-bottom: 4px;
    border: 2px solid #e4eefb;
    border-width: 3px 1px;
    background: #5577ab;
}

.vthumb {
    display: flex;
    align-items: center;
    justify-content: center;
    height: 309px;
    margin: 30px 0 auto;
    border: 1px solid #627faf;
    background: linear-gradient(90deg, #e8edf6, #c8d3e6);
}

.vthumb i {
    width: 8px;
    height: 8px;
    background: repeating-linear-gradient(#8994a8 0 1px, #e4e9f2 1px 3px);
}

.bottom {
    display: flex;
    height: 15px;
    background: #9bb6de;
}

.nav {
    background: #c9dcf5;
    border-right: 1px solid #8aa7d2;
}

.stab {
    width: 83px;
    padding-left: 2px;
    background: #fff;
    font-size: 12px;
    font-weight: 700;
    line-height: 15px;
    text-align: center;
    white-space: nowrap;
}

.newtab {
    overflow: visible;
}

.hscroll {
    display: flex;
    align-items: center;
    width: 506px;
    margin-left: auto;
    margin-right: 13px;
    background: #7b9ccb;
}

.grip {
    width: 6px;
    height: 13px;
    border: 2px solid #f2f7fe;
    background: #6a8ac0;
}

.hthumb {
    display: flex;
    align-items: center;
    justify-content: center;
    width: 404px;
    height: 13px;
    border: 1px solid #7089b5;
    background: linear-gradient(#edf1f8, #c6cfe0);
}

.hthumb i {
    width: 8px;
    height: 7px;
    background: repeating-linear-gradient(90deg, #7d889c 0 1px, #e4e9f2 1px 2px);
}

.right { margin-left: auto; }

.status {
    display: flex;
    align-items: center;
    height: 21px;
    border-top: 1px solid #5c82ba;
    background: linear-gradient(#dceaff, #b9d2f6 50%, #a6c5f1 55%, #c4dafa);
}

.mode {
    width: 63px;
    padding: 0 0 2px 6px;
    border-right: 1px solid #8db0e0;
    color: #29406b;
}

.views {
    margin-left: auto;
    height: 17px;
    border: 1px solid #8c9ab5;
    background: #e6e4df;
}

.views svg { margin: -1px; }

.pc {
    width: 42px;
    padding-left: 8px;
    color: #98abc9;
}
```
